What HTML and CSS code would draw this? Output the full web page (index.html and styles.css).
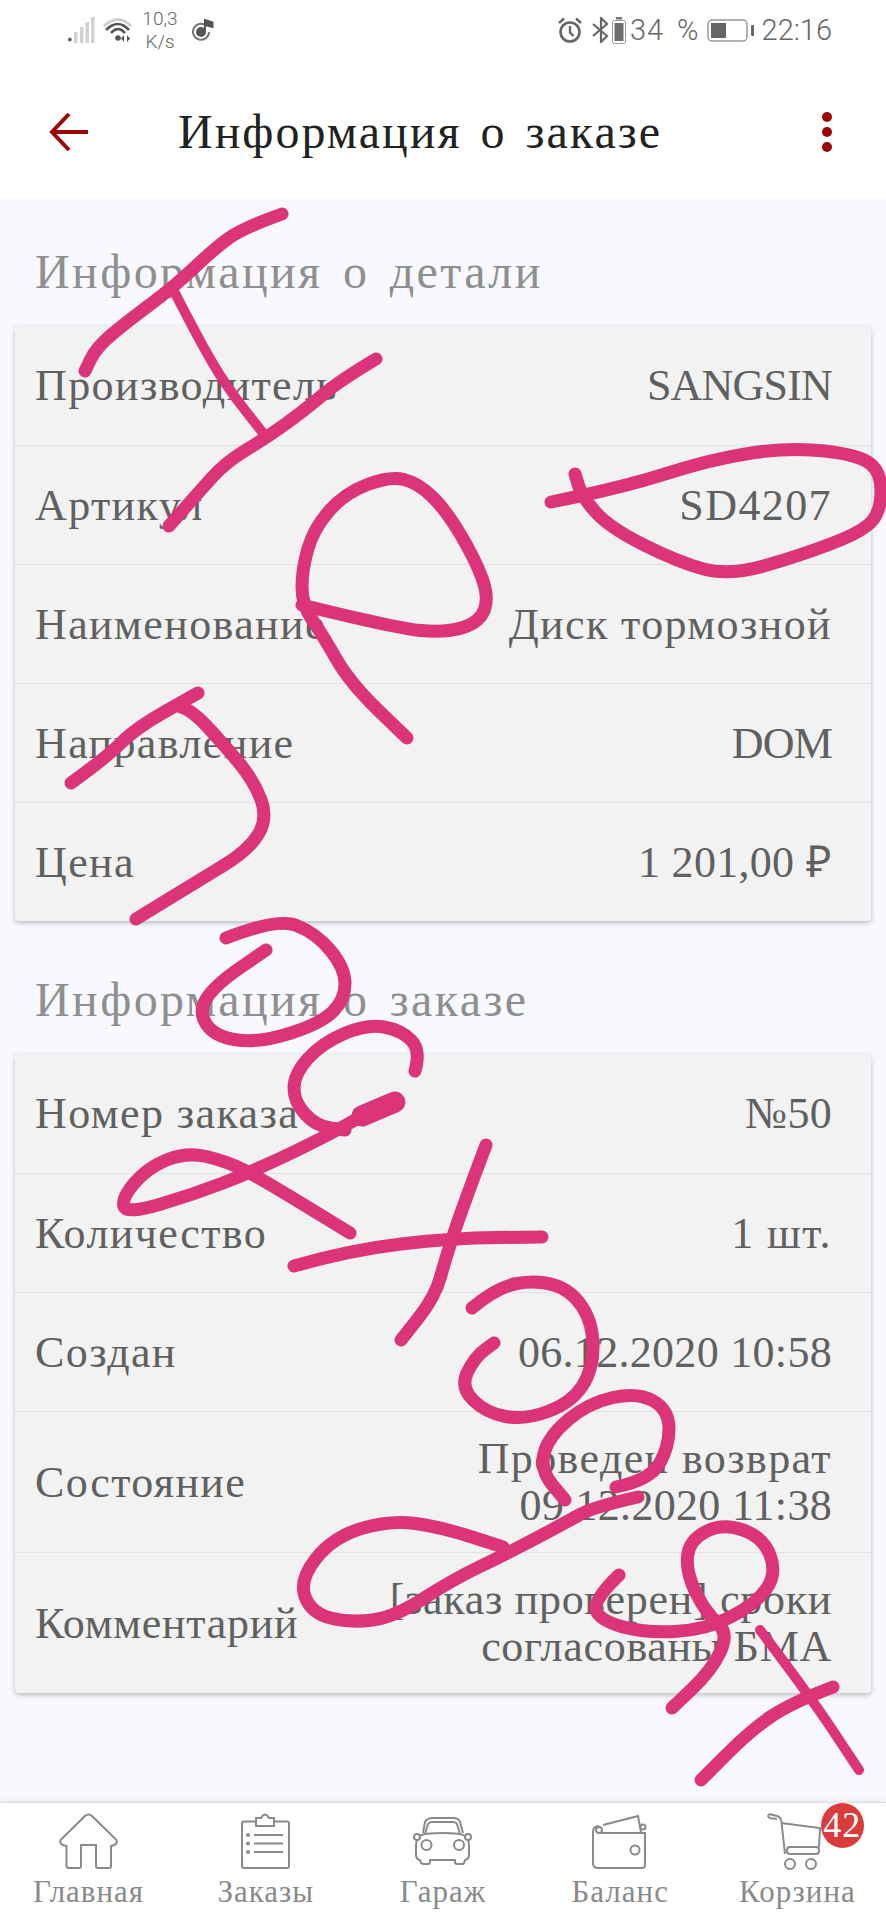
FILE: index.html
```html
<!DOCTYPE html>
<html lang="ru">
<head>
    <meta charset="UTF-8">
    <meta name="viewport" content="width=device-width, initial-scale=1.0">
    <title>Информация о заказе</title>
    <link rel="stylesheet" href="styles.css">
</head>
<body>
    <div class="screen">
        <div class="status-bar">
            <div class="status-left">
                <svg width="27" height="26" viewBox="0 0 27 26">
                    <circle cx="1.8" cy="22.5" r="2" fill="#666"/>
                    <rect x="6" y="15" width="3.5" height="11" fill="#d2d2d2"/>
                    <rect x="12" y="10" width="3.5" height="16" fill="#d2d2d2"/>
                    <rect x="17.5" y="5" width="3.5" height="21" fill="#d2d2d2"/>
                    <rect x="23" y="0" width="3.5" height="26" fill="#d2d2d2"/>
                </svg>
                <svg class="st-wifi" width="30" height="26" viewBox="0 0 30 26" fill="none">
                    <path d="M2 9Q16 -4 29 9" stroke="#cfcfcf" stroke-width="3"/>
                    <path d="M4 13Q16 1 27 13" stroke="#555" stroke-width="2.6"/>
                    <path d="M9 16Q16 8 23 16" stroke="#555" stroke-width="2.6"/>
                    <circle cx="16" cy="21" r="2.8" fill="#555"/>
                    <path d="M22 18v7l-3-3.5zM25 18v7l3-3.5z" fill="#555"/>
                </svg>
                <div class="st-speed"><span>10,3</span><span>K/s</span></div>
                <svg class="st-note" width="22" height="23" viewBox="0 0 22 23" fill="none">
                    <path d="M14 6.5A8 8 0 1 0 17 13" stroke="#777" stroke-width="2"/>
                    <circle cx="9" cy="13" r="5" fill="#555"/>
                    <path d="M13 13V1L20.5 3.5V8L13 6" stroke="#555" stroke-width="2" fill="#555"/>
                </svg>
            </div>
            <div class="status-right">
                <svg class="st-alarm" width="26" height="26" viewBox="0 0 26 26" fill="none">
                    <circle cx="13" cy="15" r="9.5" stroke="#666" stroke-width="2.6"/>
                    <path d="M13 9v6.5l3.5 3.5M2 6l5-4.5M24 6l-5-4.5" stroke="#666" stroke-width="2.4"/>
                </svg>
                <svg class="st-bt" width="17" height="26" viewBox="0 0 17 26" fill="none">
                    <path d="M1 7l14 12-6 6V1l6 6L1 19" stroke="#666" stroke-width="2.2"/>
                </svg>
                <svg class="st-batt-small" width="14" height="27" viewBox="0 0 14 27">
                    <rect x="4" y="0" width="6" height="2.5" fill="#777"/>
                    <rect x="0.5" y="3.5" width="13" height="23" rx="2" fill="#fff" stroke="#999"/>
                    <rect x="2.5" y="6" width="9" height="18" fill="#6e6e6e"/>
                </svg>
                <span class="st-percent">34 %</span>
                <svg class="st-batt" width="47" height="23" viewBox="0 0 47 23">
                    <rect x="1" y="1" width="39" height="21" rx="4" fill="#fff" stroke="#999" stroke-width="1.5"/>
                    <rect x="4" y="4" width="15" height="15" fill="#666"/>
                    <rect x="44" y="6" width="3" height="11" rx="1" fill="#666"/>
                </svg>
                <span class="st-time">22:16</span>
            </div>
        </div>

        <header class="app-bar">
            <svg class="back-icon" width="42" height="40" viewBox="0 0 42 40" fill="none">
                <path d="M40 20H4M21 2L4 20l17 18" stroke="#9c0606" stroke-width="4"/>
            </svg>
            <h1 class="page-title">Информация о заказе</h1>
            <div class="more-icon"><i></i><i></i><i></i></div>
        </header>

        <main class="content">
            <h2 class="section-title first">Информация о детали</h2>
            <section class="card">
                <div class="row"><span>Производитель</span><span class="val latin">SANGSIN</span></div>
                <div class="row"><span>Артикул</span><span class="val">SD4207</span></div>
                <div class="row"><span>Наименование</span><span class="val">Диск тормозной</span></div>
                <div class="row"><span>Направление</span><span class="val latin">DOM</span></div>
                <div class="row"><span>Цена</span><span class="val num">1 201,00 ₽</span></div>
            </section>

            <h2 class="section-title">Информация о заказе</h2>
            <section class="card">
                <div class="row"><span>Номер заказа</span><span class="val num">№50</span></div>
                <div class="row"><span>Количество</span><span class="val">1 шт.</span></div>
                <div class="row"><span>Создан</span><span class="val num">06.12.2020 10:58</span></div>
                <div class="row tall"><span>Состояние</span><span class="val">Проведен возврат<br><span class="num">09.12.2020 11:38</span></span></div>
                <div class="row tall"><span class="tight">Комментарий</span><span class="val tight">[заказ проверен] сроки<br>согласованы БМА</span></div>
            </section>
        </main>

        <nav class="tab-bar">
            <a class="tab">
                <svg width="60" height="58" viewBox="0 -1 60 58" fill="none" stroke="#8a8a8a" stroke-width="2">
                    <path d="M7.5 33Q0 32 1.5 27L26 3Q29.5 0 33 3L57.5 27Q59 32 52 33V53Q52 55 50 55H39Q37 55 37 53V32H22V53Q22 55 20 55H10Q7.5 55 7.5 53Z"/>
                </svg>
                <span>Главная</span>
            </a>
            <a class="tab">
                <svg width="50" height="58" viewBox="0 -1 50 58" fill="none" stroke="#8a8a8a" stroke-width="2">
                    <rect x="1" y="8.5" width="47" height="46.5" rx="2"/>
                    <path d="M15 13V5H20Q24 -2 28 5H33V13Z" fill="#fff"/>
                    <path d="M13 22H42M13 30.5H42M13 39H42"/>
                    <circle cx="7" cy="22" r="2" fill="#8a8a8a" stroke="none"/>
                    <circle cx="7" cy="30.5" r="2" fill="#8a8a8a" stroke="none"/>
                    <circle cx="7" cy="39" r="2" fill="#8a8a8a" stroke="none"/>
                </svg>
                <span>Заказы</span>
            </a>
            <a class="tab">
                <svg width="60" height="58" viewBox="0 -5 60 58" fill="none" stroke="#8a8a8a" stroke-width="2">
                    <path d="M10 16L12 5Q14 1 20 1H40Q46 1 47 5L50 16"/>
                    <path d="M12 17L15 7Q16 5 20 5H40Q43 5 44 7L47 17Z"/>
                    <path d="M7 19Q3 23 3 28V38Q3 42 7 43L8 46Q9 47 11 47H15Q17 47 17 45V43H42V45Q42 47 44 47H49Q51 47 51 46L52 43Q56 42 56 38V28Q56 23 52 19Q48 16 30 16Q11 16 7 19Z" fill="#fff"/>
                    <circle cx="4" cy="20" r="3" fill="#fff"/>
                    <circle cx="55" cy="20" r="3" fill="#fff"/>
                    <circle cx="13.5" cy="28" r="5"/>
                    <circle cx="46" cy="28" r="5"/>
                </svg>
                <span>Гараж</span>
            </a>
            <a class="tab">
                <svg width="56" height="58" viewBox="0 -3 56 58" fill="none" stroke="#8a8a8a" stroke-width="2">
                    <path d="M11 10L46 1L49 17"/>
                    <circle cx="51" cy="12" r="2.5" fill="#fff"/>
                    <path d="M7 11Q1 11 1 17V48Q1 53 6 53H50Q53 53 53 50V18H7"/>
                    <circle cx="7" cy="15" r="3"/>
                    <circle cx="43" cy="35" r="4.5"/>
                </svg>
                <span>Баланс</span>
            </a>
            <a class="tab">
                <svg width="60" height="58" viewBox="0 0 60 58" fill="none" stroke="#8a8a8a" stroke-width="2">
                    <path d="M2 2L10 4Q14 5 14.5 10L18 42"/>
                    <path d="M2 2Q0 5 3 6L10 7"/>
                    <path d="M14 11L53 16L52 35"/>
                    <rect x="20" y="35" width="32" height="7" rx="3"/>
                    <circle cx="23" cy="52" r="5"/>
                    <circle cx="44" cy="52" r="5"/>
                </svg>
                <span>Корзина</span>
                <b class="badge">42</b>
            </a>
        </nav>

        <svg class="scribble" id="scribble" viewBox="0 0 886 1920" width="886" height="1920"></svg>
    </div>
    <script src="sketch.js"></script>
</body>
</html>
```

FILE: styles.css
```css
* {
    box-sizing: border-box;
}

body {
    margin: 0;
    background: #f8f9ff;
    font-family: "Liberation Serif", serif;
    color: #606060;
}

.screen {
    position: relative;
    width: 886px;
    height: 1920px;
    display: flex;
    flex-direction: column;
    overflow: hidden;
}

/* Status bar */
.status-bar {
    height: 70px;
    background: #fff;
    display: flex;
    justify-content: space-between;
    align-items: center;
    padding: 0 54px 10px 68px;
    font-family: Roboto, sans-serif;
    font-weight: 300;
    color: #666;
}

.status-left,
.status-right {
    display: flex;
    align-items: center;
}

.st-wifi {
    margin-left: 7px;
}

.st-speed {
    display: flex;
    flex-direction: column;
    align-items: center;
    margin-left: 10px;
    width: 36px;
    font-size: 19px;
    line-height: 23px;
}

.st-note {
    margin-left: 14px;
}

.st-alarm {
    margin-right: 9px;
}

.st-bt {
    margin-right: 3px;
}

.st-batt-small {
    margin-right: 4px;
}

.st-percent {
    font-size: 29px;
    letter-spacing: 1px;
    word-spacing: 5px;
    margin-right: 7px;
}

.st-batt {
    margin-right: 8px;
}

.st-time {
    font-size: 29px;
}

/* App bar */
.app-bar {
    height: 129px;
    background: #fff;
    display: flex;
    align-items: center;
    padding: 0 54px 6px 48px;
}

.page-title {
    flex: 1;
    margin: 0 0 0 88px;
    font-size: 48px;
    font-weight: normal;
    color: #222;
    letter-spacing: 2px;
    word-spacing: 5px;
}

.more-icon {
    display: flex;
    flex-direction: column;
    gap: 5px;
}

.more-icon i {
    width: 10px;
    height: 10px;
    border-radius: 50%;
    background: #9c0606;
}

/* Content */
.content {
    flex: 1;
}

.section-title {
    margin: 0;
    height: 133px;
    padding: 52px 0 0 35px;
    font-size: 48px;
    line-height: 54px;
    font-weight: normal;
    color: #8f8f8f;
    letter-spacing: 2.4px;
    word-spacing: 6px;
}

.section-title.first {
    height: 127px;
    padding-top: 46px;
}

.card {
    margin: 0 15px;
    background: #f2f2f2;
    border-radius: 4px;
    box-shadow: 0 2px 5px rgba(0, 0, 0, 0.25);
}

.row {
    display: flex;
    justify-content: space-between;
    align-items: center;
    height: 119px;
    padding: 0 39px 0 20px;
    border-top: 1px solid #e2e2e2;
    font-size: 44px;
    line-height: 47px;
    letter-spacing: 1.4px;
}

.row:first-child {
    border-top: none;
}

.row.tall {
    height: 141px;
}

.val {
    text-align: right;
}

.val.num,
.num {
    letter-spacing: 0.3px;
}

.val.latin {
    letter-spacing: -0.8px;
}

.tight {
    letter-spacing: 0.7px;
}

/* Tab bar */
.tab-bar {
    height: 118px;
    background: #fff;
    display: grid;
    grid-template-columns: repeat(5, 1fr);
    border-top: 1px solid #ddd;
    box-shadow: 0 -2px 3px rgba(0, 0, 0, 0.06);
}

.tab {
    position: relative;
    display: flex;
    flex-direction: column;
    align-items: center;
    padding-top: 9px;
    font-size: 31px;
    line-height: 36px;
    color: #8a8a8a;
    letter-spacing: 1px;
}

.tab svg {
    margin-bottom: 4px;
}

.badge {
    position: absolute;
    top: 0;
    left: 112px;
    width: 43px;
    height: 45px;
    border-radius: 50%;
    background: #da3c3c;
    color: #fff;
    font-size: 36px;
    font-weight: normal;
    line-height: 45px;
    text-align: center;
    letter-spacing: 1px;
}

/* Hand drawn marks on top of the screenshot */
.scribble {
    position: absolute;
    top: 0;
    left: 0;
    pointer-events: none;
}

.scribble path {
    fill: none;
    stroke: #dc3478;
    stroke-width: 13;
    stroke-linecap: round;
    stroke-linejoin: round;
}

.scribble path.thin {
    stroke-width: 10;
}

.scribble path.blob {
    stroke-width: 21;
}
```

FILE: sketch.js
```js
// strokes of the pen, as points on the 886x1920 screen
const strokes = [
    { pts: [[282,214],[243,228],[215,248],[175,286],[124,324],[96,348],[85,371]], cls: "" },
    { pts: [[175,293],[198,338],[226,386],[263,433]], cls: "thin" },
    { pts: [[376,359],[339,381],[305,410],[266,438],[226,462],[198,493],[169,526]], cls: "" },
    { pts: [[551,502],[621,488],[712,459],[791,447],[859,455],[881,472],[881,510],[864,531],[802,555],[729,576],[678,562],[610,528],[582,497],[575,474]], cls: "" },
    { pts: [[302,605],[395,628],[446,633],[480,622],[489,597],[475,559],[446,510],[418,483],[390,476],[345,493],[314,528],[302,569],[302,605],[322,634],[350,683],[407,738]], cls: "" },
    { pts: [[71,783],[107,757],[136,728],[198,693]], cls: "" },
    { pts: [[181,707],[192,710],[226,747],[254,781],[268,818],[249,850],[198,881],[136,919]], cls: "" },
    { pts: [[226,938],[277,918],[316,933],[345,968],[345,999],[322,1023],[260,1043],[215,1037],[198,1012],[215,985],[266,950]], cls: "" },
    { pts: [[415,1071],[421,1050],[401,1030],[367,1024],[322,1043],[294,1074],[294,1102],[316,1126],[345,1130]], cls: "" },
    { pts: [[395,1102],[362,1116]], cls: "blob" },
    { pts: [[362,1116],[333,1133],[254,1171],[192,1195],[127,1214],[121,1199],[147,1168],[186,1152],[226,1161],[260,1178],[350,1233]], cls: "" },
    { pts: [[294,1266],[350,1250],[452,1238],[542,1237]], cls: "" },
    { pts: [[486,1145],[463,1206],[446,1257],[435,1297],[401,1340]], cls: "" },
    { pts: [[472,1308],[497,1287],[537,1280],[571,1290],[593,1323],[593,1370],[571,1403],[525,1420],[486,1413],[460,1387],[475,1357],[494,1343]], cls: "" },
    { pts: [[616,1487],[650,1480],[669,1447],[669,1410],[638,1392],[588,1403],[548,1437],[540,1470],[565,1500]], cls: "" },
    { pts: [[638,1497],[593,1507],[565,1523],[508,1553],[452,1580],[395,1617],[350,1623],[311,1613],[299,1580],[333,1537],[390,1520],[441,1527],[503,1547]], cls: "" },
    { pts: [[619,1575],[593,1600],[599,1620],[644,1633],[706,1630],[757,1603],[777,1573],[763,1537],[723,1523],[689,1540],[686,1573],[706,1613],[729,1633],[712,1670],[672,1708]], cls: "" },
    { pts: [[760,1630],[808,1693],[859,1770]], cls: "thin" },
    { pts: [[833,1687],[791,1703],[751,1730],[701,1780]], cls: "" }
];

const svg = document.getElementById("scribble");

// smooth the line through the midpoints
function toPath(pts) {
    let d = `M${pts[0][0]} ${pts[0][1]}`;
    for (let i = 1; i < pts.length - 1; i++) {
        let mx = (pts[i][0] + pts[i + 1][0]) / 2;
        let my = (pts[i][1] + pts[i + 1][1]) / 2;
        d += ` Q${pts[i][0]} ${pts[i][1]} ${mx} ${my}`;
    }
    let last = pts[pts.length - 1];
    return d + ` L${last[0]} ${last[1]}`;
}

strokes.forEach(function (s) {
    let p = document.createElementNS("http://www.w3.org/2000/svg", "path");
    p.setAttribute("d", toPath(s.pts));
    if (s.cls) p.setAttribute("class", s.cls);
    svg.appendChild(p);
});
```
